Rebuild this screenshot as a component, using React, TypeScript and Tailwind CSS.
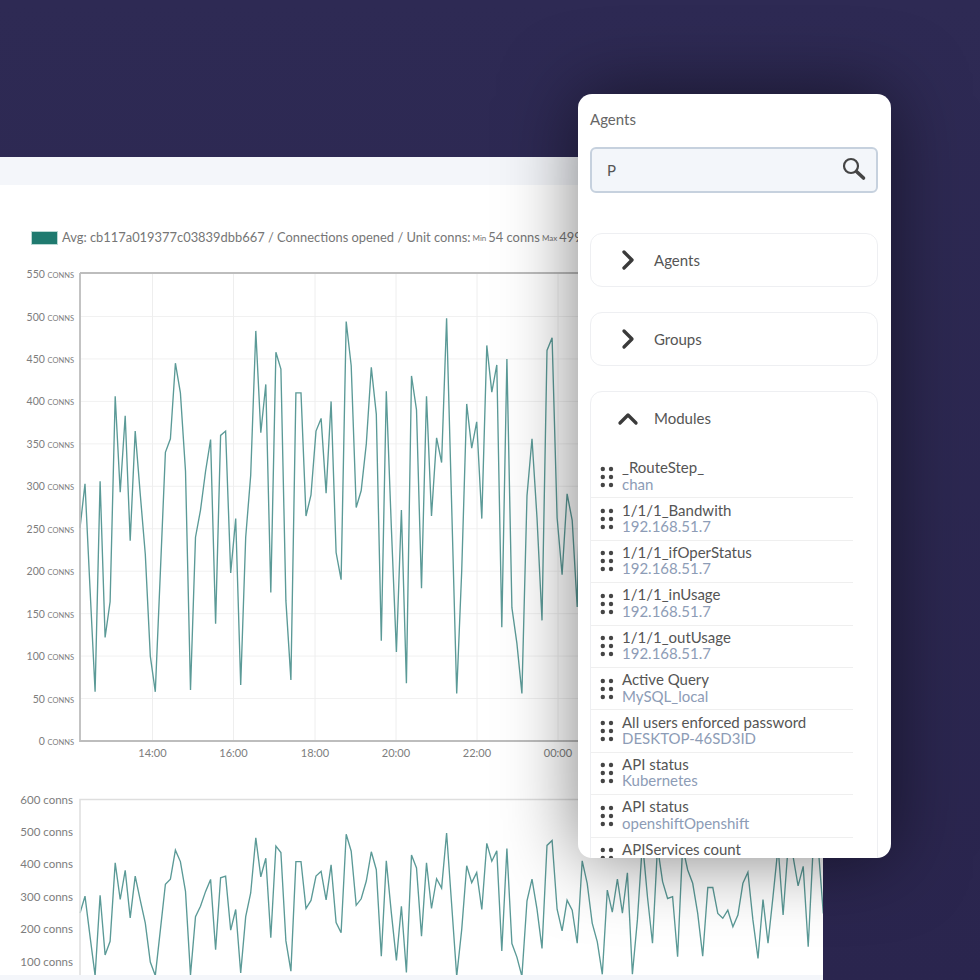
import { ChevronRight, ChevronUp } from "lucide-react";

const data = [251,303,180,58,306,122,164,406,293,383,236,365,290,220,100,58,200,340,356,445,410,318,60,240,272,318,355,138,360,365,198,262,66,240,313,483,363,420,175,458,438,165,72,410,410,265,290,365,380,292,400,222,190,494,442,275,295,350,440,385,118,412,250,105,272,68,430,390,180,406,265,357,328,498,280,56,200,397,345,376,262,466,411,443,134,450,157,115,56,289,356,263,142,460,475,263,196,291,260,158,412,343,220,162,62,322,254,356,251,375,62,230,470,300,158,456,348,296,302,116,456,384,343,250,118,330,330,250,235,260,209,245,343,377,230,111,293,158,302,456,245,456,425,335,395,147,456,456,250];

const step = 5.022;
const points = (y0: number, k: number) =>
  data.map((v, i) => `${(80 + i * step).toFixed(1)},${(y0 - v * k).toFixed(1)}`).join(" ");

const yTicks = [550, 500, 450, 400, 350, 300, 250, 200, 150, 100, 50, 0];
const xTicks: [number, string][] = [[152.5, "14:00"], [233.5, "16:00"], [315, "18:00"], [396, "20:00"], [477, "22:00"], [558, "00:00"]];
const y2Ticks = [600, 500, 400, 300, 200, 100];

const modules: [string, string][] = [
  ["_RouteStep_", "chan"],
  ["1/1/1_Bandwith", "192.168.51.7"],
  ["1/1/1_ifOperStatus", "192.168.51.7"],
  ["1/1/1_inUsage", "192.168.51.7"],
  ["1/1/1_outUsage", "192.168.51.7"],
  ["Active Query", "MySQL_local"],
  ["All users enforced password", "DESKTOP-46SD3ID"],
  ["API status", "Kubernetes"],
  ["API status", "openshiftOpenshift"],
  ["APIServices count", ""],
];

function Handle() {
  return (
    <svg width="14" height="22" viewBox="0 0 14 22" className="shrink-0" fill="#454545">
      {[3, 11, 19].flatMap((y) => [2.8, 11].map((x) => <circle key={`${x}-${y}`} cx={x} cy={y} r="2.2" />))}
    </svg>
  );
}

function SearchGlyph() {
  return (
    <svg width="26" height="26" viewBox="0 0 26 26" fill="none" stroke="#454545" className="shrink-0 -translate-y-[1px]">
      <circle cx="10" cy="10" r="7" strokeWidth="2.2" />
      <path d="M15.5 15.5 L22.5 22" strokeWidth="3.6" strokeLinecap="round" />
    </svg>
  );
}

function Closed({ label }: { label: string }) {
  return (
    <div className="flex h-[54px] items-center rounded-[12px] border border-[#eeeff2] pl-[21px] text-[15px] text-[#555]">
      <ChevronRight size={32} strokeWidth={2.5} className="text-[#3a3a3a]" />
      <span className="ml-[10px]">{label}</span>
    </div>
  );
}

export default function App() {
  return (
    <div className="relative h-[980px] w-[980px] overflow-hidden bg-gradient-to-b from-[#2e2a54] to-[#2a254e] pt-[157px] font-['Lato',sans-serif]">
      <div className="flex h-[823px] w-[823px] flex-col bg-white">
        <div className="h-[28px] shrink-0 bg-[#f4f6fa]" />
        <div className="mt-[46px] flex h-[14px] items-center whitespace-nowrap pl-[31px] text-[12.9px] text-[#767676]">
          <span className="h-[14px] w-[27px] border border-[#b9d8d3] bg-[#1f7a6f]" />
          <span className="ml-[4px]">Avg: cb117a019377c03839dbb667 / Connections opened / Unit conns:</span>
          <span className="ml-[2px] text-[8px]">Min</span>
          <span className="ml-[2px]">54 conns</span>
          <span className="ml-[2px] text-[8px]">Max</span>
          <span className="ml-[2px]">499 conns</span>
        </div>
        <svg width="823" height="510" viewBox="0 262 823 510" className="mt-[17px] block shrink-0 font-['Lato',sans-serif]">
          {yTicks.slice(1, -1).map((v) => (
            <line key={v} x1="80" x2="823" y1={741 - v * 0.849} y2={741 - v * 0.849} stroke="#f1f1f1" />
          ))}
          {xTicks.map(([x]) => (
            <line key={x} x1={x} x2={x} y1="273" y2="741" stroke="#eeeeee" />
          ))}
          <polyline points={points(741, 0.849)} fill="none" stroke="#5b9a97" strokeWidth="1.35" />
          <path d="M80 273 V741 H823 M80 273 H823" fill="none" stroke="#bdbdbd" strokeWidth="1.8" />
          {yTicks.map((v) => (
            <text key={v} x="74" y={745 - v * 0.849} textAnchor="end" fontSize="10.5" fill="#7d7d7d">
              {v} <tspan fontSize="7.5">CONNS</tspan>
            </text>
          ))}
          {xTicks.map(([x, t]) => (
            <text key={t} x={x} y="757" textAnchor="middle" fontSize="11" fill="#7d7d7d">{t}</text>
          ))}
        </svg>
        <svg width="823" height="184" viewBox="0 791 823 184" className="mt-[19px] block shrink-0 font-['Lato',sans-serif]">
          <polyline points={points(994.4, 0.324)} fill="none" stroke="#5b9a97" strokeWidth="1.35" />
          <path d="M80 975 V799.5 H823" fill="none" stroke="#dedede" strokeWidth="1.5" />
          {y2Ticks.map((v) => (
            <text key={v} x="73" y={998 - v * 0.324} textAnchor="end" fontSize="11.5" fill="#7d7d7d">{v} conns</text>
          ))}
        </svg>
        <div className="flex-1 bg-[#f4f6fa]" />
      </div>

      <div className="absolute left-[578px] top-[94px] h-[764px] w-[313px] overflow-hidden rounded-[14px] bg-white px-[12px] shadow-[0_0_75px_rgba(0,0,0,0.5)]">
        <div className="mt-[16px] h-[18px] text-[15px] leading-[18px] text-[#666]">Agents</div>
        <div className="mt-[19px] flex h-[46px] w-[288px] items-center justify-between rounded-[6px] border-2 border-[#c6d1de] bg-[#f3f6fa] pl-[15px] pr-[9px] text-[15px] text-[#555]">
          <span>P</span>
          <SearchGlyph />
        </div>
        <div className="mt-[40px] flex w-[288px] flex-col gap-[25px]">
          <Closed label="Agents" />
          <Closed label="Groups" />
          <div className="h-[480px] rounded-[12px] border border-[#eeeff2]">
            <div className="flex h-[53px] items-center pl-[21px] text-[15px] text-[#555]">
              <ChevronUp size={32} strokeWidth={2.5} className="text-[#3a3a3a]" />
              <span className="ml-[10px]">Modules</span>
            </div>
            <div className="mt-[11px] w-[262px]">
              {modules.map(([t, s], i) => (
                <div key={i} className="flex h-[42.4px] items-center border-b border-[#efefef] pl-[9px]">
                  <Handle />
                  <div className="-mt-[2px] ml-[8px] min-h-[33px] whitespace-nowrap text-[15px] leading-[16.5px]">
                    <div className="text-[#555]">{t}</div>
                    <div className="text-[#8d9cb6]">{s}</div>
                  </div>
                </div>
              ))}
            </div>
          </div>
        </div>
      </div>
    </div>
  );
}
